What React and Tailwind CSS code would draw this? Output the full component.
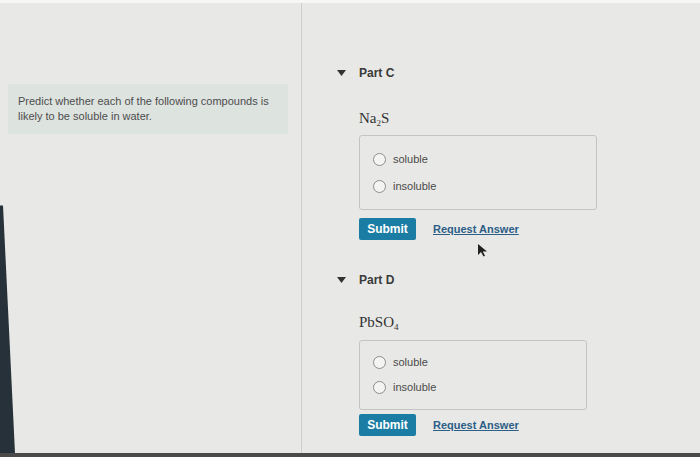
import { Fragment } from 'react'

const Radio = ({ label }) => (
  <label className="flex items-center gap-[7px] h-[12px] text-[11px] text-[#4a4a4a]">
    <span className="w-[13px] h-[13px] rounded-full border border-[#8d8d8d] bg-[#f4f4f2]" />
    {label}
  </label>
)

const Caret = () => (
  <svg width="9" height="6" viewBox="0 0 9 6" className="shrink-0">
    <path d="M0 0 L9 0 L4.5 6 Z" fill="#333" />
  </svg>
)

const Part = ({ title, formula, box, formulaGap, boxGap, submitGap, radioGap }) => (
  <div>
    <div className="flex items-center gap-[13px] pl-[35px] h-[18px]">
      <Caret />
      <span className="text-[12px] font-bold text-[#3a3a3a]">{title}</span>
    </div>
    <div className="pl-[57px]">
      <div className={`${formulaGap} h-[18px] leading-[18px] text-[15px] text-[#333]`} style={{ fontFamily: '"Liberation Serif", serif' }}>
        {formula}
      </div>
      <div className={`${boxGap} ${box} border border-[#c4c4c2] rounded-[3px] flex flex-col justify-center ${radioGap} pl-[13px]`}>
        <Radio label="soluble" />
        <Radio label="insoluble" />
      </div>
      <div className={`${submitGap} flex items-center gap-[17px]`}>
        <button className="w-[57px] h-[22px] bg-[#1b7da3] text-white text-[12px] font-bold rounded-[2px]">Submit</button>
        <a className="text-[11px] font-bold text-[#2c5e86] underline">Request Answer</a>
      </div>
    </div>
  </div>
)

const Sub = ({ children }) => (
  <span className="relative top-[3px] text-[9px] leading-none">{children}</span>
)

export default function App() {
  return (
    <div
      className="relative w-[700px] h-[457px] overflow-hidden bg-[#e8e8e6] flex border-t-[3px] border-t-[#f7f7f6] border-b-[4px] border-b-[#4a4a4a]"
      style={{ fontFamily: '"Liberation Sans", Arial, sans-serif' }}
    >
      {/* left: problem statement */}
      <div className="w-[302px] shrink-0 border-r border-[#cfcfcd] pt-[81px] pl-[8px] pr-[13px]">
        <div className="bg-[#dde3df] px-[10px] pt-[10px] pb-[10px] text-[11px] leading-[15px] text-[#4d4d4d]">
          Predict whether each of the following compounds is likely to be soluble in water.
        </div>
      </div>

      {/* right: parts */}
      <div className="flex-1 pt-[61px]">
        <Part
          title="Part C"
          formula={<Fragment>Na<Sub>2</Sub>S</Fragment>}
          box="h-[75px] w-[238px]"
          formulaGap="mt-[27px]"
          boxGap="mt-[8px]"
          submitGap="mt-[8px]"
          radioGap="gap-[15px]"
        />
        <div className="pl-[175px] mt-[3px] h-[14px]">
          <svg width="12" height="14" viewBox="0 0 12 14">
            <path d="M1 1 L1 12 L4 9 L6.5 13.5 L8 12.8 L5.8 8.5 L10 8.5 Z" fill="#222" />
          </svg>
        </div>
        <div className="mt-[14px]">
          <Part
            title="Part D"
            formula={<Fragment>PbSO<Sub>4</Sub></Fragment>}
            box="h-[70px] w-[228px]"
            formulaGap="mt-[24px]"
            boxGap="mt-[9px]"
            submitGap="mt-[4px]"
            radioGap="gap-[13px]"
          />
        </div>
      </div>

      {/* monitor bezel visible at the lower-left edge of the photo */}
      <div className="absolute left-0 top-0 w-[18px] h-full bg-[#27313a] [clip-path:polygon(0_45%,3px_45%,15px_100%,0_100%)]" />
    </div>
  )
}
